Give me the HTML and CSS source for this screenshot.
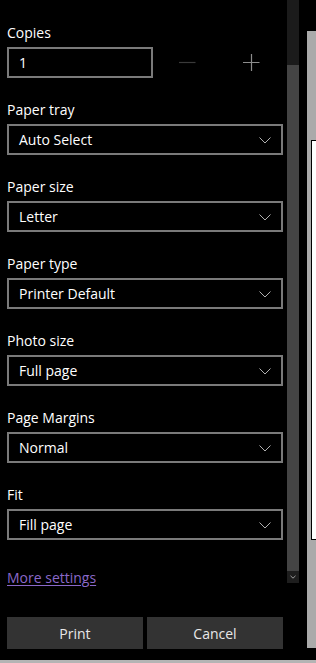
FILE: index.html
```html
<!DOCTYPE html>
<html>
<head>
<meta charset="utf-8">
<link rel="stylesheet" href="styles.css">
</head>
<body>
<div class="screen">
  <div class="panel">
    <div class="settings">
      <div class="field">
        <div class="label">Copies</div>
        <div class="copies-row">
          <div class="input">1</div>
          <div class="stepper">
            <span class="step minus"><svg width="17" height="17" viewBox="0 0 17 17"><path d="M0 8.5H16.5" stroke="#3a3a3a" stroke-width="1.2"/></svg></span>
            <span class="step plus"><svg width="17" height="17" viewBox="0 0 17 17"><path d="M0 8.5H16.5M8.5 0V17" stroke="#8c8c8c" stroke-width="1.2"/></svg></span>
          </div>
        </div>
      </div>
      <div class="field">
        <div class="label">Paper tray</div>
        <div class="select"><span>Auto Select</span><svg class="chev" width="12" height="7" viewBox="0 0 12 7"><path d="M0.5 0.5L6 6L11.5 0.5" fill="none" stroke="#b0b0b0" stroke-width="1"/></svg></div>
      </div>
      <div class="field">
        <div class="label">Paper size</div>
        <div class="select"><span>Letter</span><svg class="chev" width="12" height="7" viewBox="0 0 12 7"><path d="M0.5 0.5L6 6L11.5 0.5" fill="none" stroke="#b0b0b0" stroke-width="1"/></svg></div>
      </div>
      <div class="field">
        <div class="label">Paper type</div>
        <div class="select"><span>Printer Default</span><svg class="chev" width="12" height="7" viewBox="0 0 12 7"><path d="M0.5 0.5L6 6L11.5 0.5" fill="none" stroke="#b0b0b0" stroke-width="1"/></svg></div>
      </div>
      <div class="field">
        <div class="label">Photo size</div>
        <div class="select"><span>Full page</span><svg class="chev" width="12" height="7" viewBox="0 0 12 7"><path d="M0.5 0.5L6 6L11.5 0.5" fill="none" stroke="#b0b0b0" stroke-width="1"/></svg></div>
      </div>
      <div class="field">
        <div class="label">Page Margins</div>
        <div class="select"><span>Normal</span><svg class="chev" width="12" height="7" viewBox="0 0 12 7"><path d="M0.5 0.5L6 6L11.5 0.5" fill="none" stroke="#b0b0b0" stroke-width="1"/></svg></div>
      </div>
      <div class="field">
        <div class="label">Fit</div>
        <div class="select"><span>Fill page</span><svg class="chev" width="12" height="7" viewBox="0 0 12 7"><path d="M0.5 0.5L6 6L11.5 0.5" fill="none" stroke="#b0b0b0" stroke-width="1"/></svg></div>
      </div>
      <a class="more" href="#">More settings</a>
    </div>
    <div class="buttons">
      <div class="btn">Print</div>
      <div class="btn">Cancel</div>
    </div>
  </div>
  <div class="scrollbar">
    <div class="track"></div>
    <div class="thumb"></div>
    <div class="arrow"><svg width="6" height="4" viewBox="0 0 6 4"><path d="M0.5 0.8L3 3.2L5.5 0.8" fill="none" stroke="#9a9a9a" stroke-width="1"/></svg></div>
  </div>
  <div class="preview">
    <div class="page"></div>
  </div>
</div>
<div class="bottom-line"></div>
</body>
</html>
```
FILE: styles.css
```css
html, body {
  margin: 0;
  padding: 0;
  background: #000;
}
body {
  width: 316px;
  height: 663px;
  overflow: hidden;
  font-family: "Segoe UI", "Open Sans", sans-serif;
  font-size: 14px;
  color: #fff;
}
.screen {
  display: flex;
  height: 660px;
}
.panel {
  width: 276px;
  padding: 23px 4px 0 7px;
  display: flex;
  flex-direction: column;
  justify-content: space-between;
}
.settings {
  display: flex;
  flex-direction: column;
}
.field {
  display: flex;
  flex-direction: column;
  gap: 4px;
  margin-bottom: 22px;
}
.label {
  height: 20px;
  line-height: 20px;
  color: #fff;
}
.copies-row {
  display: flex;
  align-items: center;
}
.input {
  box-sizing: border-box;
  width: 148px;
  height: 31px;
  border: 2px solid #7a7a7a;
  padding-left: 10px;
  line-height: 27px;
}
.stepper {
  display: flex;
  margin-left: 2px;
}
.step {
  width: 64px;
  height: 31px;
  display: flex;
  align-items: center;
  justify-content: center;
}
.select {
  box-sizing: border-box;
  height: 31px;
  border: 2px solid #7a7a7a;
  display: flex;
  align-items: center;
  justify-content: space-between;
  padding: 0 10px 0 10px;
}
.select span {
  line-height: 27px;
}
.chev {
  display: block;
  margin-top: 1px;
}
.more {
  margin-top: 6px;
  line-height: 20px;
  color: #8a68c9;
  text-decoration: underline;
  text-underline-offset: 2px;
  align-self: flex-start;
}
.buttons {
  display: flex;
  gap: 4px;
  margin-bottom: 11px;
}
.btn {
  flex: 1;
  height: 32px;
  background: #333;
  color: #e8e8e8;
  display: flex;
  align-items: center;
  justify-content: center;
}
.scrollbar {
  width: 12px;
  height: 583px;
  display: flex;
  flex-direction: column;
}
.track {
  height: 65px;
  background: #1b1b1b;
}
.thumb {
  flex: 1;
  background: #444;
}
.arrow {
  height: 12px;
  background: #1e1e1e;
  display: flex;
  align-items: center;
  justify-content: center;
}
.arrow svg {
  display: block;
}
.preview {
  margin-left: 8px;
  margin-top: 31px;
  height: 617px;
  flex: 1;
  background: #aaa;
  padding: 109px 0 0 4px;
  box-sizing: border-box;
}
.page {
  height: 400px;
  background: #fff;
  border: 1px solid #000;
  border-right: none;
  box-sizing: border-box;
}
.bottom-line {
  height: 3px;
  background: #b4b4b4;
}
```
